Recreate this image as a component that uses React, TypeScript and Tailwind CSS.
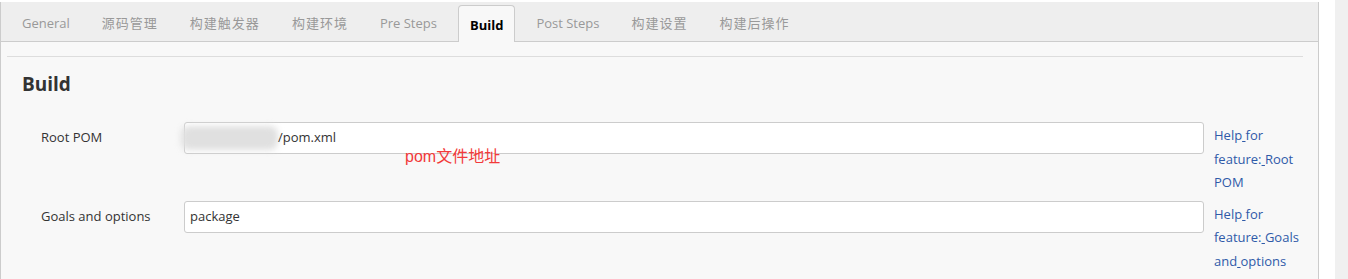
import React from "react";

const tabs = ["General", "源码管理", "构建触发器", "构建环境", "Pre Steps", "Build", "Post Steps", "构建设置", "构建后操作"];
const isCjk = (s: string) => /[\u4e00-\u9fff]/.test(s);

function HelpLink({ words }: { words: string[] }) {
  return (
    <div className="w-[105px] shrink-0 pl-[10px] pr-[2px] text-[13px] leading-[23.5px] text-[#2f5aa8] pt-[2px]">
      {words.map((w, i) => (
        <React.Fragment key={i}>
          <span>{w}</span>
          {i < words.length - 1 && <span className="underline"> </span>}
        </React.Fragment>
      ))}
    </div>
  );
}

export default function App() {
  const font = { fontFamily: '"Open Sans", "Noto Sans CJK SC", sans-serif' };
  return (
    <div className="w-[1348px] h-[279px] flex bg-[#f0f0f0] overflow-hidden" style={font}>
      <div className="w-[1335px] shrink-0 bg-white pt-[2px] h-full">
        <div className="w-[1319px] h-full border-l border-r border-[#cccccc] bg-[#f8f8f8] flex flex-col">
          {/* tab bar */}
          <div className="h-[40px] shrink-0 bg-[#eeeeee] border-b border-[#cccccc] flex items-end pl-[10px] gap-[10px]">
            {tabs.map((t) =>
              t === "Build" ? (
                <div
                  key={t}
                  className="h-[37px] -mb-px px-[11px] bg-[#f8f8f8] border border-b-0 border-[#cccccc] rounded-t-[4px] flex items-center text-[13px] font-bold text-black"
                >
                  <span className="pt-[3px]">{t}</span>
                </div>
              ) : (
                <div
                  key={t}
                  className={
                    isCjk(t)
                      ? "h-[37px] px-[11px] flex items-center text-[13px] tracking-[1px] text-[#999999]"
                      : "h-[37px] px-[11px] flex items-center text-[13px] text-[#999999]"
                  }
                >
                  <span className="pt-[3px]">{t}</span>
                </div>
              )
            )}
          </div>
          {/* separator */}
          <div className="mt-[14px] ml-[6px] mr-[15px] h-px shrink-0 bg-[#dddddd]" />
          {/* heading */}
          <div className="pl-[21px] pt-[14px] text-[19px] font-bold text-[#333333] leading-[26px]">Build</div>
          {/* rows */}
          <div className="mt-[25px] flex flex-col gap-[6px]">
            <div className="flex items-start relative">
              <div className="w-[183px] shrink-0 pl-[40px] pt-[6px] text-[13px] text-[#333333]">Root POM</div>
              <div className="w-[1020px] shrink-0 h-[32px] bg-white border border-[#cccccc] rounded-[3px] flex items-center relative">
                <div className="absolute left-[-4px] top-[3px] w-[97px] h-[24px] bg-[#e0e0e0] blur-[3px] rounded-[8px]" />
                <span className="ml-[93px] text-[13px] text-[#333333] relative">/pom.xml</span>
              </div>
              <HelpLink words={["Help", "for", "feature:", "Root", "POM"]} />
              <div
                className="absolute left-[404px] top-[23px] text-[16px] text-[#f23a3a]"
                style={{ fontFamily: '"Liberation Sans", "Noto Sans CJK SC", sans-serif' }}
              >
                pom文件地址
              </div>
            </div>
            <div className="flex items-start">
              <div className="w-[183px] shrink-0 pl-[40px] pt-[6px] text-[13px] text-[#333333]">Goals and options</div>
              <div className="w-[1020px] shrink-0 h-[32px] bg-white border border-[#cccccc] rounded-[3px] flex items-center">
                <span className="ml-[5px] text-[13px] text-[#333333]">package</span>
              </div>
              <HelpLink words={["Help", "for", "feature:", "Goals", "and", "options"]} />
            </div>
          </div>
        </div>
      </div>
    </div>
  );
}
